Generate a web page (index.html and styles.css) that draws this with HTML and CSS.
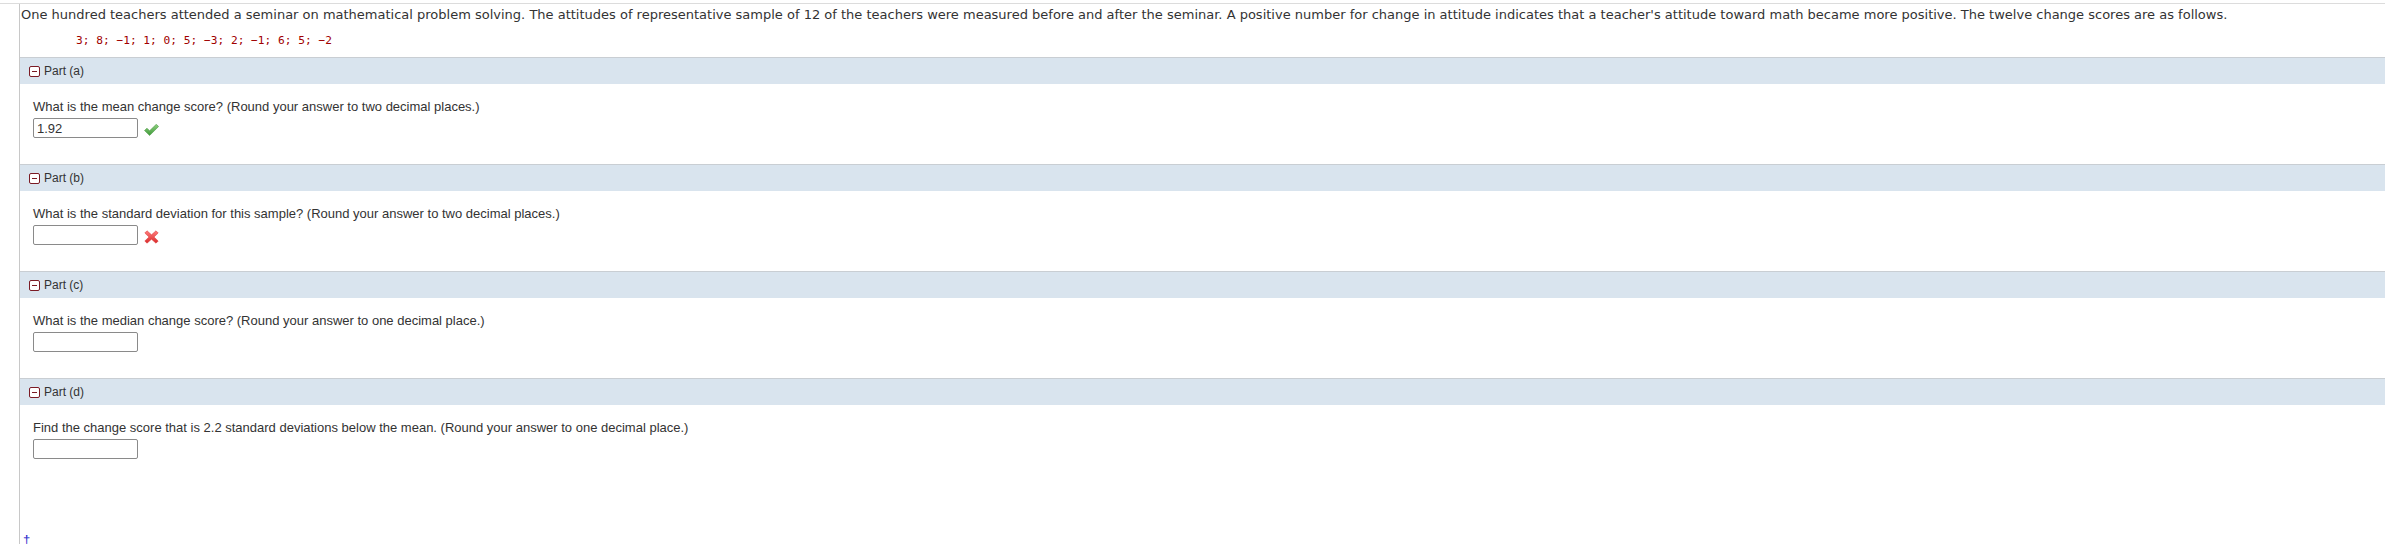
FILE: index.html
```html
<!DOCTYPE html>
<html>
<head>
<meta charset="utf-8">
<link rel="stylesheet" href="styles.css">
</head>
<body>
<div class="topline"></div>
<div class="main">
  <div class="intro">
    <p>One hundred teachers attended a seminar on mathematical problem solving. The attitudes of representative sample of 12 of the teachers were measured before and after the seminar. A positive number for change in attitude indicates that a teacher's attitude toward math became more positive. The twelve change scores are as follows.</p>
    <div class="scores">3; 8; &minus;1; 1; 0; 5; &minus;3; 2; &minus;1; 6; 5; &minus;2</div>
  </div>

  <div class="part">
    <div class="part-head"><span class="toggle"></span><span class="part-title">Part (a)</span></div>
    <div class="part-body">
      <div class="question">What is the mean change score? (Round your answer to two decimal places.)</div>
      <div class="answer-row">
        <input class="answer" type="text" value="1.92">
        <svg class="mark" width="15" height="12" viewBox="0 0 15 12"><defs><linearGradient id="g" x1="0" y1="0" x2="0" y2="1"><stop offset="0" stop-color="#8fd07f"/><stop offset="1" stop-color="#3f9a3a"/></linearGradient></defs><path d="M0.5 6.5 L3 4.2 L5.6 6.8 L12.3 0.3 L14.6 2.5 L5.6 11.5 Z" fill="url(#g)" stroke="#4c9a45" stroke-width="0.6" stroke-linejoin="round"/></svg>
      </div>
    </div>
  </div>

  <div class="part">
    <div class="part-head"><span class="toggle"></span><span class="part-title">Part (b)</span></div>
    <div class="part-body">
      <div class="question">What is the standard deviation for this sample? (Round your answer to two decimal places.)</div>
      <div class="answer-row">
        <input class="answer" type="text" value="">
        <svg class="mark" width="15" height="14" viewBox="0 0 15 14"><defs><linearGradient id="r" x1="0" y1="0" x2="0" y2="1"><stop offset="0" stop-color="#ff7d7d"/><stop offset="1" stop-color="#d92a2a"/></linearGradient></defs><path d="M0.8 3 L3 0.8 L7.5 4.8 L12 0.8 L14.2 3 L10 7 L14.2 11 L12 13.2 L7.5 9.2 L3 13.2 L0.8 11 L5 7 Z" fill="url(#r)" stroke="#d33" stroke-width="0.5" stroke-linejoin="round"/></svg>
      </div>
    </div>
  </div>

  <div class="part">
    <div class="part-head"><span class="toggle"></span><span class="part-title">Part (c)</span></div>
    <div class="part-body">
      <div class="question">What is the median change score? (Round your answer to one decimal place.)</div>
      <div class="answer-row">
        <input class="answer" type="text" value="">
      </div>
    </div>
  </div>

  <div class="part">
    <div class="part-head"><span class="toggle"></span><span class="part-title">Part (d)</span></div>
    <div class="part-body">
      <div class="question">Find the change score that is 2.2 standard deviations below the mean. (Round your answer to one decimal place.)</div>
      <div class="answer-row">
        <input class="answer" type="text" value="">
      </div>
    </div>
  </div>

  <div class="footer">&dagger;</div>
</div>
</body>
</html>
```

FILE: styles.css
```css
html, body {
  margin: 0;
  padding: 0;
  background: #fff;
}
body {
  height: 544px;
  overflow: hidden;
}
.topline {
  height: 3px;
  border-bottom: 1px solid #dcdcdc;
}
.main {
  margin-left: 19px;
  border-left: 1px solid #c8c8c8;
  height: 540px;
}
.intro {
  padding: 2px 0 0 1px;
}
.intro p {
  margin: 0;
  font-family: "DejaVu Sans", sans-serif;
  font-size: 13px;
  line-height: 18px;
  color: #333;
  white-space: nowrap;
}
.scores {
  margin: 9px 0 8px 55px;
  font-family: "DejaVu Sans Mono", monospace;
  font-size: 11.2px;
  line-height: 16px;
  color: #a00000;
}
.part-head {
  border-top: 1px solid #c9ced3;
  background: #d9e4ee;
  height: 26px;
  display: flex;
  align-items: center;
  padding-left: 9px;
  gap: 4px;
}
.toggle {
  width: 9px;
  height: 9px;
  border: 1px solid #7b1b25;
  border-radius: 2px;
  background: #fff;
  display: flex;
  align-items: center;
  justify-content: center;
}
.toggle::before {
  content: "";
  width: 5px;
  height: 1px;
  background: #7b1b25;
}
.part-title {
  font-family: "Liberation Sans", Arial, sans-serif;
  font-size: 12px;
  color: #333;
  line-height: 14px;
}
.part-body {
  padding: 15px 0 26px 13px;
}
.question {
  font-family: "Liberation Sans", Arial, sans-serif;
  font-size: 13px;
  line-height: 16px;
  color: #333;
}
.answer-row {
  margin-top: 3px;
  display: flex;
  align-items: center;
  gap: 6px;
  height: 20px;
}
.answer {
  box-sizing: border-box;
  width: 105px;
  height: 20px;
  margin: 0;
  padding: 0 3px;
  border: 1px solid #8a8a8a;
  border-radius: 2px;
  font-family: "Liberation Sans", Arial, sans-serif;
  font-size: 13px;
  color: #333;
  background: #fff;
  outline: none;
}
.mark {
  display: block;
  margin-top: 3px;
}
.footer {
  margin-top: 48px;
  padding-left: 3px;
  font-family: "Liberation Sans", Arial, sans-serif;
  font-size: 13px;
  line-height: 14px;
  color: #2a2acc;
}
```
